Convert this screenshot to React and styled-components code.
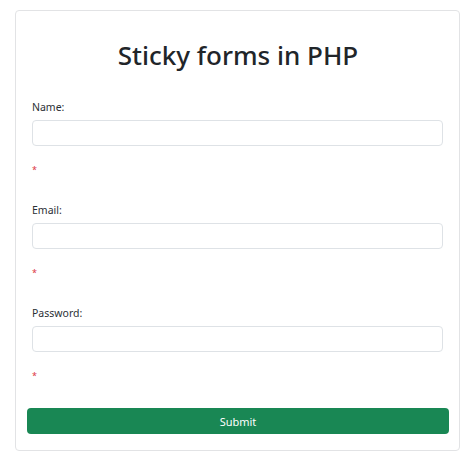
import React from "react";
import styled, { createGlobalStyle } from "styled-components";

const Global = createGlobalStyle`
  html, body { margin: 0; padding: 0; background: #fff; }
  body { font-family: "Noto Sans", "Open Sans", sans-serif; color: #212529; }
  * { box-sizing: border-box; }
`;

const Page = styled.div`
  padding: 10px 14px 0 15px;
  width: 474px;
`;

const Card = styled.form`
  width: 445px;
  height: 441px;
  border: 1px solid #e2e3e5;
  border-radius: 4px;
  padding: 0 10px 0 11px;
  display: flex;
  flex-direction: column;
`;

const Title = styled.h1`
  margin: 28px 0 0;
  font-size: 26px;
  font-weight: 500;
  line-height: 32px;
  text-align: center;
  color: #212529;
`;

const Fields = styled.div`
  padding: 0 6px 0 5px;
  margin-top: 29px;
  display: flex;
  flex-direction: column;
  gap: 27px;
`;

const Group = styled.div`
  display: flex;
  flex-direction: column;
`;

const Label = styled.label`
  font-size: 10.5px;
  line-height: 14px;
  color: #2b3035;
  margin-bottom: 6px;
`;

const Input = styled.input`
  height: 26px;
  width: 100%;
  border: 1px solid #dee2e6;
  border-radius: 4px;
  background: #fff;
  padding: 0 8px;
  font: inherit;
  outline: none;
`;

const Required = styled.span`
  color: #dc3545;
  font-size: 9px;
  line-height: 12px;
  margin-top: 18px;
`;

const Button = styled.button`
  margin-top: 26px;
  height: 26px;
  width: 100%;
  border: none;
  border-radius: 4px;
  background: #198754;
  color: #fff;
  font-family: inherit;
  font-size: 11px;
  cursor: pointer;
`;

const fields = [
  { label: "Name:", type: "text" },
  { label: "Email:", type: "email" },
  { label: "Password:", type: "password" },
];

export default function App() {
  return (
    <>
      <Global />
      <Page>
        <Card onSubmit={(e) => e.preventDefault()}>
          <Title>Sticky forms in PHP</Title>
          <Fields>
            {fields.map((f) => (
              <Group key={f.label}>
                <Label>{f.label}</Label>
                <Input type={f.type} />
                <Required>*</Required>
              </Group>
            ))}
          </Fields>
          <Button type="submit">Submit</Button>
        </Card>
      </Page>
    </>
  );
}
